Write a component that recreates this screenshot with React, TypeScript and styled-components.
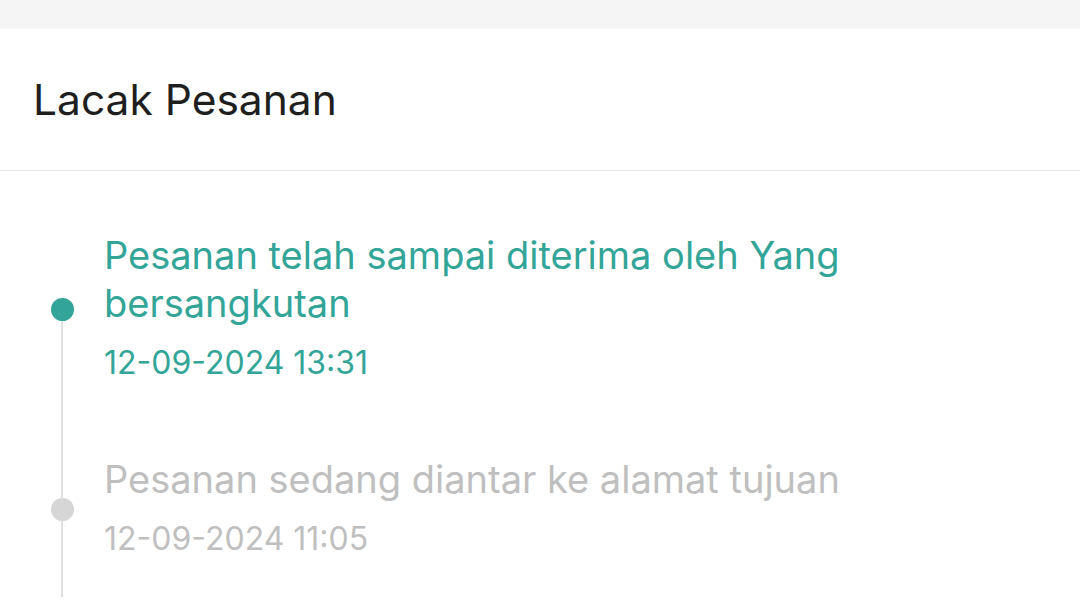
import React from "react";
import styled, { createGlobalStyle } from "styled-components";

const GlobalStyle = createGlobalStyle`
  html, body {
    margin: 0;
    padding: 0;
    background: #ffffff;
  }
  body {
    font-family: Inter, "Noto Sans", "Liberation Sans", sans-serif;
    -webkit-font-smoothing: antialiased;
  }
`;

const Page = styled.div`
  width: 1080px;
  height: 608px;
  overflow: hidden;
  background: #ffffff;
`;

const TopBand = styled.div`
  height: 29px;
  background: #f5f5f5;
`;

const Header = styled.header`
  height: 141px;
  display: flex;
  align-items: center;
  padding: 0 33px;
  border-bottom: 1px solid #e6e6e6;
`;

const Title = styled.h1`
  margin: 0;
  font-size: 42.5px;
  font-weight: 400;
  color: #1f1f1f;
`;

const Timeline = styled.ul`
  list-style: none;
  margin: 0;
  padding: 26px 0 0 50px;
`;

const Item = styled.li`
  display: flex;
  gap: 30px;
`;

const Rail = styled.div`
  width: 24px;
  display: flex;
  flex-direction: column;
  align-items: center;
`;

const Segment = styled.div<{ $hidden?: boolean }>`
  flex: 1;
  width: 2px;
  background: ${(p) => (p.$hidden ? "transparent" : "#e0e0e0")};
`;

const Dot = styled.span<{ $active?: boolean }>`
  width: 23px;
  height: 23px;
  border-radius: 50%;
  flex-shrink: 0;
  background: ${(p) => (p.$active ? "#33a598" : "#d6d6d6")};
`;

const Content = styled.div<{ $active?: boolean }>`
  padding: 34px 0;
  color: ${(p) => (p.$active ? "#33a598" : "#bfbfbf")};
  max-width: 780px;
`;

const Message = styled.p`
  margin: 0;
  font-size: 38px;
  line-height: 48px;
`;

const Time = styled.p`
  margin: 12px 0 0;
  font-size: 32px;
  line-height: 48px;
`;

const steps = [
  {
    text: "Pesanan telah sampai diterima oleh Yang bersangkutan",
    time: "12-09-2024 13:31",
  },
  {
    text: "Pesanan sedang diantar ke alamat tujuan",
    time: "12-09-2024 11:05",
  },
];

const App = () => {
  return (
    <Page>
      <GlobalStyle />
      <TopBand />
      <Header>
        <Title>Lacak Pesanan</Title>
      </Header>
      <Timeline>
        {steps.map((step, i) => (
          <Item key={step.time}>
            <Rail>
              <Segment $hidden={i === 0} />
              <Dot $active={i === 0} />
              <Segment />
            </Rail>
            <Content $active={i === 0}>
              <Message>{step.text}</Message>
              <Time>{step.time}</Time>
            </Content>
          </Item>
        ))}
      </Timeline>
    </Page>
  );
};

export default App;
